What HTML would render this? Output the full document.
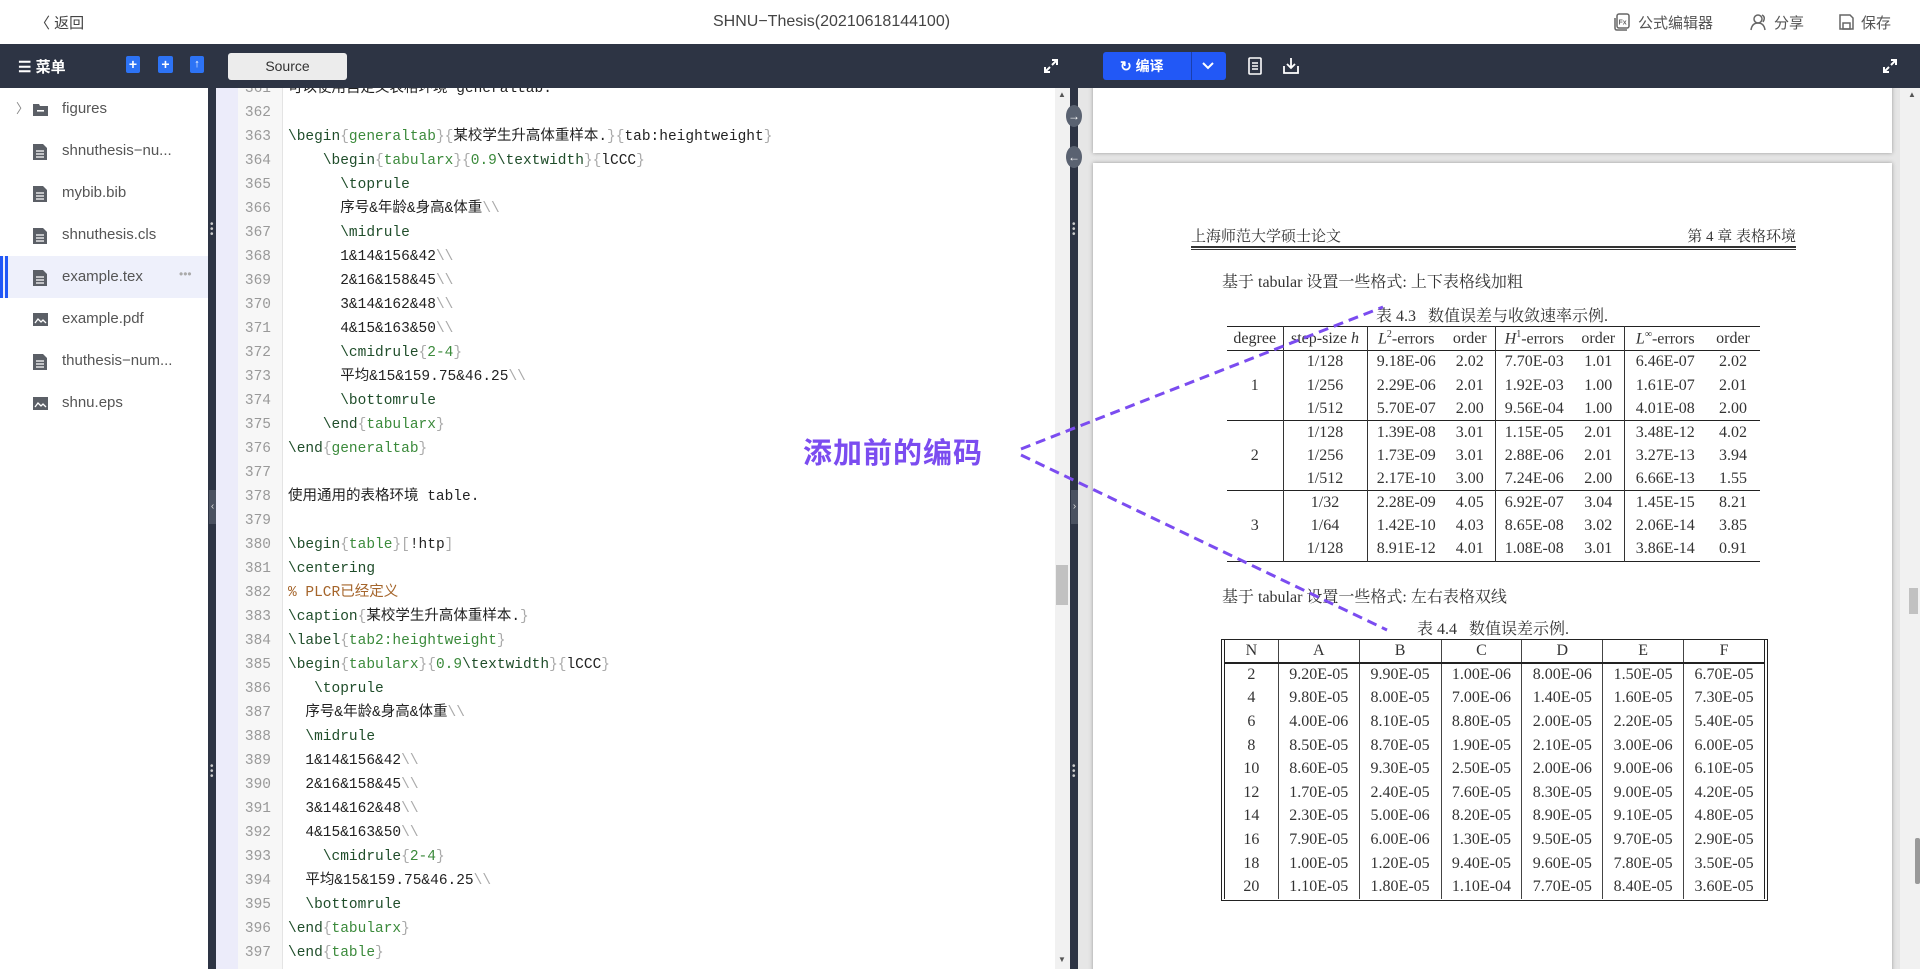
<!DOCTYPE html>
<html><head><meta charset="utf-8">
<style>
*{margin:0;padding:0;box-sizing:border-box}
body{width:1920px;height:969px;overflow:hidden;background:#fff;font-family:"Liberation Sans","Noto Sans CJK SC",sans-serif;position:relative;color:#333}
.a{position:absolute}
.top{left:0;top:0;width:1920px;height:44px;background:#fff}
.bar{left:0;top:44px;width:1920px;height:44px;background:#2d3444}
.side{left:0;top:88px;width:208px;height:881px;background:#fff}
.item{position:absolute;left:0;width:208px;height:42px;font-size:15px;color:#555;line-height:42px}
.item .t{position:absolute;left:62px}
.item svg{position:absolute;left:33px;top:14px}
.div{background:#2d3444;width:8px}
.code{left:216px;top:88px;width:839px;height:881px;overflow:hidden;background:#fff}
.gut1{left:0;top:0;width:22px;height:881px;background:#ececfa}
.gut2{left:22px;top:0;width:45px;height:881px;background:#f7f7f7;border-right:1px solid #e4e4e4}
.lines{position:absolute;left:0;top:-11px;width:839px}
.ln{height:24px;line-height:24px;font-family:"Liberation Mono","Noto Sans CJK SC",monospace;font-size:14.5px;white-space:pre;position:relative}
.ln .n{position:absolute;left:22px;width:33px;text-align:right;color:#999}
.ln .c{position:absolute;left:72px;color:#222}
.k{color:#1f4d2a}.g{color:#3b8a3b}.b{color:#aaa}.m{color:#a5652b}
.pdf{left:1078px;top:88px;width:822px;height:881px;background:#e6e6e6;overflow:hidden}
.page{position:absolute;left:15px;width:799px;background:#fff;box-shadow:0 0 4px #999}
.serif{font-family:"Liberation Serif","Noto Serif CJK SC",serif;color:#333}
table{border-collapse:collapse}
td{padding:0;text-align:center;font-family:"Liberation Serif","Noto Serif CJK SC",serif;font-size:16px;color:#333}
</style></head><body>

<div class="a top">
  <div class="a" style="left:35px;top:12px;font-size:15px;color:#444">〈 返回</div>
  <div class="a" style="left:713px;top:13px;font-size:16px;color:#444">SHNU−Thesis(20210618144100)</div>
  <svg class="a" style="left:1613px;top:13px" width="17" height="18" viewBox="0 0 17 18"><path d="M2 5V15Q2 17 4 17H14" fill="none" stroke="#666" stroke-width="1.5"/><rect x="4" y="1" width="12" height="14" rx="2" fill="none" stroke="#666" stroke-width="1.5"/><text x="5.5" y="11.5" font-size="7" font-family="Liberation Sans" fill="#666" font-weight="bold">Fx</text></svg>
  <div class="a" style="left:1638px;top:12px;font-size:15px;color:#555">公式编辑器</div>
  <svg class="a" style="left:1750px;top:13px" width="18" height="18" viewBox="0 0 18 18"><circle cx="8" cy="6" r="4" fill="none" stroke="#666" stroke-width="1.5"/><path d="M1 17Q2 10 8 10Q14 10 15 17M12 2Q16 4 13 9" fill="none" stroke="#666" stroke-width="1.5"/></svg>
  <div class="a" style="left:1774px;top:12px;font-size:15px;color:#555">分享</div>
  <svg class="a" style="left:1838px;top:13px" width="17" height="18" viewBox="0 0 17 18"><path d="M2 2H12L15 5V16H2Z" fill="none" stroke="#666" stroke-width="1.5"/><rect x="5" y="10" width="7" height="6" fill="none" stroke="#666" stroke-width="1.5"/></svg>
  <div class="a" style="left:1861px;top:12px;font-size:15px;color:#555">保存</div>
</div>

<div class="a bar">
  <div class="a" style="left:18px;top:12px;color:#fff;font-size:15px;font-weight:bold">☰ 菜单</div>
  <div class="a" style="left:126px;top:12px;width:14px;height:17px;background:#2d73f5;border-radius:2px;color:#fff;font-size:14px;line-height:17px;text-align:center;font-weight:bold">+</div>
  <div class="a" style="left:158px;top:12px;width:15px;height:17px;background:#2d73f5;border-radius:2px;color:#fff;font-size:14px;line-height:17px;text-align:center;font-weight:bold">+</div>
  <div class="a" style="left:190px;top:12px;width:14px;height:17px;background:#2d73f5;border-radius:2px;color:#fff;font-size:11px;line-height:17px;text-align:center;font-weight:bold">↑</div>
  <div class="a" style="left:228px;top:9px;width:119px;height:27px;background:#ececec;border-radius:3px;font-size:14px;line-height:27px;text-align:center;color:#333">Source</div>
  <svg class="a" style="left:1043px;top:14px" width="16" height="16" viewBox="0 0 16 16"><path d="M9 2H14V7M14 2L9 7M7 14H2V9M2 14L7 9" fill="none" stroke="#fff" stroke-width="2"/></svg>
  <div class="a" style="left:1103px;top:8px;width:123px;height:28px;background:#2258f6;border-radius:3px"></div>
  <div class="a" style="left:1191px;top:8px;width:1px;height:28px;background:#1a3fae"></div>
  <div class="a" style="left:1120px;top:12px;color:#fff;font-size:14px;font-weight:bold">↻ 编译</div>
  <svg class="a" style="left:1202px;top:17px" width="12" height="10" viewBox="0 0 12 10"><path d="M1 2L6 7L11 2" fill="none" stroke="#fff" stroke-width="2"/></svg>
  <svg class="a" style="left:1248px;top:13px" width="14" height="18" viewBox="0 0 14 18"><rect x="1" y="1" width="12" height="16" rx="1" fill="none" stroke="#fff" stroke-width="1.6"/><path d="M4 6H10M4 9H10M4 12H10" stroke="#fff" stroke-width="1.5"/></svg>
  <svg class="a" style="left:1282px;top:13px" width="18" height="18" viewBox="0 0 18 18"><path d="M2 9V16H16V9M9 1V11M5 7L9 11L13 7" fill="none" stroke="#fff" stroke-width="1.8"/></svg>
  <svg class="a" style="left:1882px;top:14px" width="16" height="16" viewBox="0 0 16 16"><path d="M9 2H14V7M14 2L9 7M7 14H2V9M2 14L7 9" fill="none" stroke="#fff" stroke-width="2"/></svg>
</div>

<div class="a side">
  <div class="item" style="top:0"><span class="a" style="left:16px;color:#888;font-size:13px">〉</span><svg width="15" height="13" viewBox="0 0 15 13" style="top:15px"><path d="M0 1H6L7 3H15V13H0Z" fill="#5b5f66"/><rect x="4" y="7" width="7" height="1.6" fill="#fff"/></svg><span class="t">figures</span></div>
  <div class="item" style="top:42px"><svg width="14" height="16"><path d="M0 0H10L14 4V16H0Z" fill="#5b5f66"/><path d="M3 7H11M3 10H11M3 13H11" stroke="#fff" stroke-width="1.3"/></svg><span class="t">shnuthesis−nu...</span></div>
  <div class="item" style="top:84px"><svg width="14" height="16"><path d="M0 0H10L14 4V16H0Z" fill="#5b5f66"/><path d="M3 7H11M3 10H11M3 13H11" stroke="#fff" stroke-width="1.3"/></svg><span class="t">mybib.bib</span></div>
  <div class="item" style="top:126px"><svg width="14" height="16"><path d="M0 0H10L14 4V16H0Z" fill="#5b5f66"/><path d="M3 7H11M3 10H11M3 13H11" stroke="#fff" stroke-width="1.3"/></svg><span class="t">shnuthesis.cls</span></div>
  <div class="item" style="top:168px;background:#eef0fb"><div class="a" style="left:0;top:0;width:3px;height:42px;background:#2258f6"></div><div class="a" style="left:5px;top:0;width:3px;height:42px;background:#2258f6"></div><svg width="14" height="16"><path d="M0 0H10L14 4V16H0Z" fill="#5b5f66"/><path d="M3 7H11M3 10H11M3 13H11" stroke="#fff" stroke-width="1.3"/></svg><span class="t">example.tex</span><span class="a" style="left:179px;color:#aaa;font-size:12px;top:-3px">•••</span></div>
  <div class="item" style="top:210px"><svg width="15" height="13" style="top:15px"><rect width="15" height="13" fill="#5b5f66"/><path d="M2 10L5 6L8 9L10 7L13 10" fill="none" stroke="#fff" stroke-width="1.3"/></svg><span class="t">example.pdf</span></div>
  <div class="item" style="top:252px"><svg width="14" height="16"><path d="M0 0H10L14 4V16H0Z" fill="#5b5f66"/><path d="M3 7H11M3 10H11M3 13H11" stroke="#fff" stroke-width="1.3"/></svg><span class="t">thuthesis−num...</span></div>
  <div class="item" style="top:294px"><svg width="15" height="13" style="top:15px"><rect width="15" height="13" fill="#5b5f66"/><path d="M2 10L5 6L8 9L10 7L13 10" fill="none" stroke="#fff" stroke-width="1.3"/></svg><span class="t">shnu.eps</span></div>
</div>
<div class="a div" style="left:208px;top:88px;height:881px"></div>
<div class="a" style="left:210px;top:222px;color:#ccc;font-size:10px;line-height:5px">•<br>•<br>•</div>
<div class="a" style="left:210px;top:764px;color:#ccc;font-size:10px;line-height:5px">•<br>•<br>•</div>
<div class="a" style="left:209px;top:490px;width:7px;height:34px;background:#4a5160;color:#ddd;font-size:10px;line-height:34px;text-align:center">‹</div>

<div class="a code">
  <div class="a gut1"></div><div class="a gut2"></div>
  <div class="lines">
<div class="ln"><span class="n">361</span><span class="c">可以使用自定义表格环境 generaltab.</span></div>
<div class="ln"><span class="n">362</span><span class="c"></span></div>
<div class="ln"><span class="n">363</span><span class="c"><span class="k">\begin</span><span class="b">{</span><span class="g">generaltab</span><span class="b">}{</span>某校学生升高体重样本.<span class="b">}{</span>tab:heightweight<span class="b">}</span></span></div>
<div class="ln"><span class="n">364</span><span class="c">    <span class="k">\begin</span><span class="b">{</span><span class="g">tabularx</span><span class="b">}{</span><span class="g">0.9</span><span class="k">\textwidth</span><span class="b">}{</span>lCCC<span class="b">}</span></span></div>
<div class="ln"><span class="n">365</span><span class="c">      <span class="k">\toprule</span></span></div>
<div class="ln"><span class="n">366</span><span class="c">      序号&amp;年龄&amp;身高&amp;体重<span class="b">\\</span></span></div>
<div class="ln"><span class="n">367</span><span class="c">      <span class="k">\midrule</span></span></div>
<div class="ln"><span class="n">368</span><span class="c">      1&amp;14&amp;156&amp;42<span class="b">\\</span></span></div>
<div class="ln"><span class="n">369</span><span class="c">      2&amp;16&amp;158&amp;45<span class="b">\\</span></span></div>
<div class="ln"><span class="n">370</span><span class="c">      3&amp;14&amp;162&amp;48<span class="b">\\</span></span></div>
<div class="ln"><span class="n">371</span><span class="c">      4&amp;15&amp;163&amp;50<span class="b">\\</span></span></div>
<div class="ln"><span class="n">372</span><span class="c">      <span class="k">\cmidrule</span><span class="b">{</span><span class="g">2-4</span><span class="b">}</span></span></div>
<div class="ln"><span class="n">373</span><span class="c">      平均&amp;15&amp;159.75&amp;46.25<span class="b">\\</span></span></div>
<div class="ln"><span class="n">374</span><span class="c">      <span class="k">\bottomrule</span></span></div>
<div class="ln"><span class="n">375</span><span class="c">    <span class="k">\end</span><span class="b">{</span><span class="g">tabularx</span><span class="b">}</span></span></div>
<div class="ln"><span class="n">376</span><span class="c"><span class="k">\end</span><span class="b">{</span><span class="g">generaltab</span><span class="b">}</span></span></div>
<div class="ln"><span class="n">377</span><span class="c"></span></div>
<div class="ln"><span class="n">378</span><span class="c">使用通用的表格环境 table.</span></div>
<div class="ln"><span class="n">379</span><span class="c"></span></div>
<div class="ln"><span class="n">380</span><span class="c"><span class="k">\begin</span><span class="b">{</span><span class="g">table</span><span class="b">}[</span>!htp<span class="b">]</span></span></div>
<div class="ln"><span class="n">381</span><span class="c"><span class="k">\centering</span></span></div>
<div class="ln"><span class="n">382</span><span class="c"><span class="m">% PLCR已经定义</span></span></div>
<div class="ln"><span class="n">383</span><span class="c"><span class="k">\caption</span><span class="b">{</span>某校学生升高体重样本.<span class="b">}</span></span></div>
<div class="ln"><span class="n">384</span><span class="c"><span class="k">\label</span><span class="b">{</span><span class="g">tab2:heightweight</span><span class="b">}</span></span></div>
<div class="ln"><span class="n">385</span><span class="c"><span class="k">\begin</span><span class="b">{</span><span class="g">tabularx</span><span class="b">}{</span><span class="g">0.9</span><span class="k">\textwidth</span><span class="b">}{</span>lCCC<span class="b">}</span></span></div>
<div class="ln"><span class="n">386</span><span class="c">   <span class="k">\toprule</span></span></div>
<div class="ln"><span class="n">387</span><span class="c">  序号&amp;年龄&amp;身高&amp;体重<span class="b">\\</span></span></div>
<div class="ln"><span class="n">388</span><span class="c">  <span class="k">\midrule</span></span></div>
<div class="ln"><span class="n">389</span><span class="c">  1&amp;14&amp;156&amp;42<span class="b">\\</span></span></div>
<div class="ln"><span class="n">390</span><span class="c">  2&amp;16&amp;158&amp;45<span class="b">\\</span></span></div>
<div class="ln"><span class="n">391</span><span class="c">  3&amp;14&amp;162&amp;48<span class="b">\\</span></span></div>
<div class="ln"><span class="n">392</span><span class="c">  4&amp;15&amp;163&amp;50<span class="b">\\</span></span></div>
<div class="ln"><span class="n">393</span><span class="c">    <span class="k">\cmidrule</span><span class="b">{</span><span class="g">2-4</span><span class="b">}</span></span></div>
<div class="ln"><span class="n">394</span><span class="c">  平均&amp;15&amp;159.75&amp;46.25<span class="b">\\</span></span></div>
<div class="ln"><span class="n">395</span><span class="c">  <span class="k">\bottomrule</span></span></div>
<div class="ln"><span class="n">396</span><span class="c"><span class="k">\end</span><span class="b">{</span><span class="g">tabularx</span><span class="b">}</span></span></div>
<div class="ln"><span class="n">397</span><span class="c"><span class="k">\end</span><span class="b">{</span><span class="g">table</span><span class="b">}</span></span></div>
  </div>
</div>
<div class="a" style="left:1055px;top:88px;width:15px;height:881px;background:#f1f1f1"></div>
<div class="a" style="left:1056px;top:565px;width:12px;height:40px;background:#c1c1c1"></div>
<div class="a" style="left:1058px;top:90px;font-size:8px;color:#555">▲</div>
<div class="a" style="left:1058px;top:955px;font-size:8px;color:#555">▼</div>

<div class="a pdf">
  <div class="page" style="top:-20px;height:85px"></div>
  <div class="page" style="top:75px;height:830px"></div>
</div>
<div class="a" style="left:1900px;top:88px;width:20px;height:881px;background:#f1f1f1"></div>
<div class="a" style="left:1909px;top:588px;width:9px;height:26px;background:#c1c1c1"></div>
<div class="a" style="left:1908px;top:90px;font-size:8px;color:#555">▲</div>
<div class="a" style="left:1915px;top:838px;width:5px;height:46px;background:#999;border-radius:2px"></div>

<div class="a div" style="left:1070px;top:88px;height:881px"></div>
<div class="a" style="left:1066px;top:105px;width:16px;height:22px;border-radius:50%;background:#5a6271;color:#fff;font-size:12px;line-height:22px;text-align:center;font-weight:bold">→</div>
<div class="a" style="left:1066px;top:146px;width:16px;height:22px;border-radius:50%;background:#5a6271;color:#fff;font-size:12px;line-height:22px;text-align:center;font-weight:bold">←</div>
<div class="a" style="left:1072px;top:222px;color:#ccc;font-size:10px;line-height:5px">•<br>•<br>•</div>
<div class="a" style="left:1072px;top:764px;color:#ccc;font-size:10px;line-height:5px">•<br>•<br>•</div>
<div class="a" style="left:1071px;top:490px;width:7px;height:34px;background:#4a5160;color:#ddd;font-size:10px;line-height:34px;text-align:center">›</div>

<div class="a serif" style="left:1191px;top:225px;font-size:15px">上海师范大学硕士论文</div>
<div class="a serif" style="left:1680px;top:225px;width:116px;text-align:right;font-size:15px">第 4 章  表格环境</div>
<div class="a" style="left:1191px;top:246px;width:605px;height:1.5px;background:#333"></div>
<div class="a" style="left:1191px;top:249px;width:605px;height:1px;background:#333"></div>
<div class="a serif" style="left:1222px;top:269px;font-size:16px">基于 tabular 设置一些格式: 上下表格线加粗</div>
<div class="a serif" style="left:1376px;top:303px;font-size:16px">表 4.3 &nbsp;&nbsp;数值误差与收敛速率示例.</div>

<table class="a" style="left:1227px;top:326px;width:533px;border-top:1.6px solid #222;border-bottom:1.6px solid #222">
<colgroup><col style="width:56px"><col style="width:84px"><col style="width:78px"><col style="width:50px"><col style="width:78px"><col style="width:51px"><col style="width:82px"><col style="width:54px"></colgroup>
<tr style="height:24px;border-bottom:1px solid #222"><td style="border-right:1px solid #333">degree</td><td style="border-right:1px solid #333">step-size <i>h</i></td><td><i>L</i><sup style="font-size:10px">2</sup>-errors</td><td style="border-right:1px solid #333">order</td><td><i>H</i><sup style="font-size:10px">1</sup>-errors</td><td style="border-right:1px solid #333">order</td><td><i>L</i><sup style="font-size:10px">∞</sup>-errors</td><td>order</td></tr>
<tr style="height:23.4px"><td rowspan="3" style="border-right:1px solid #333">1</td><td style="border-right:1px solid #333">1/128</td><td>9.18E-06</td><td style="border-right:1px solid #333">2.02</td><td>7.70E-03</td><td style="border-right:1px solid #333">1.01</td><td>6.46E-07</td><td>2.02</td></tr>
<tr style="height:23.4px"><td style="border-right:1px solid #333">1/256</td><td>2.29E-06</td><td style="border-right:1px solid #333">2.01</td><td>1.92E-03</td><td style="border-right:1px solid #333">1.00</td><td>1.61E-07</td><td>2.01</td></tr>
<tr style="height:23.4px;border-bottom:1px solid #222"><td style="border-right:1px solid #333">1/512</td><td>5.70E-07</td><td style="border-right:1px solid #333">2.00</td><td>9.56E-04</td><td style="border-right:1px solid #333">1.00</td><td>4.01E-08</td><td>2.00</td></tr>
<tr style="height:23.4px"><td rowspan="3" style="border-right:1px solid #333">2</td><td style="border-right:1px solid #333">1/128</td><td>1.39E-08</td><td style="border-right:1px solid #333">3.01</td><td>1.15E-05</td><td style="border-right:1px solid #333">2.01</td><td>3.48E-12</td><td>4.02</td></tr>
<tr style="height:23.4px"><td style="border-right:1px solid #333">1/256</td><td>1.73E-09</td><td style="border-right:1px solid #333">3.01</td><td>2.88E-06</td><td style="border-right:1px solid #333">2.01</td><td>3.27E-13</td><td>3.94</td></tr>
<tr style="height:23.4px;border-bottom:1px solid #222"><td style="border-right:1px solid #333">1/512</td><td>2.17E-10</td><td style="border-right:1px solid #333">3.00</td><td>7.24E-06</td><td style="border-right:1px solid #333">2.00</td><td>6.66E-13</td><td>1.55</td></tr>
<tr style="height:23.4px"><td rowspan="3" style="border-right:1px solid #333">3</td><td style="border-right:1px solid #333">1/32</td><td>2.28E-09</td><td style="border-right:1px solid #333">4.05</td><td>6.92E-07</td><td style="border-right:1px solid #333">3.04</td><td>1.45E-15</td><td>8.21</td></tr>
<tr style="height:23.4px"><td style="border-right:1px solid #333">1/64</td><td>1.42E-10</td><td style="border-right:1px solid #333">4.03</td><td>8.65E-08</td><td style="border-right:1px solid #333">3.02</td><td>2.06E-14</td><td>3.85</td></tr>
<tr style="height:23.4px"><td style="border-right:1px solid #333">1/128</td><td>8.91E-12</td><td style="border-right:1px solid #333">4.01</td><td>1.08E-08</td><td style="border-right:1px solid #333">3.01</td><td>3.86E-14</td><td>0.91</td></tr>
</table>

<div class="a serif" style="left:1222px;top:584px;font-size:16px">基于 tabular 设置一些格式: 左右表格双线</div>
<div class="a serif" style="left:1417px;top:616px;font-size:16px">表 4.4 &nbsp;&nbsp;数值误差示例.</div>

<div class="a" style="left:1221px;top:639px;width:547px;height:262px;border:1px solid #222;border-top:1.5px solid #222;border-bottom:1.5px solid #222"></div>
<table class="a" style="left:1224px;top:640px;width:541px;border-left:1px solid #222;border-right:1px solid #222">
<colgroup><col style="width:54px"><col style="width:81px"><col style="width:82px"><col style="width:81px"><col style="width:81px"><col style="width:81px"><col style="width:81px"></colgroup>
<tr style="height:23px;border-bottom:2px solid #222"><td style="border-right:1px solid #444">N</td><td style="border-right:1px solid #444">A</td><td style="border-right:1px solid #444">B</td><td style="border-right:1px solid #444">C</td><td style="border-right:1px solid #444">D</td><td style="border-right:1px solid #444">E</td><td>F</td></tr>
<tr style="height:23.6px"><td style="border-right:1px solid #444">2</td><td style="border-right:1px solid #444">9.20E-05</td><td style="border-right:1px solid #444">9.90E-05</td><td style="border-right:1px solid #444">1.00E-06</td><td style="border-right:1px solid #444">8.00E-06</td><td style="border-right:1px solid #444">1.50E-05</td><td>6.70E-05</td></tr>
<tr style="height:23.6px"><td style="border-right:1px solid #444">4</td><td style="border-right:1px solid #444">9.80E-05</td><td style="border-right:1px solid #444">8.00E-05</td><td style="border-right:1px solid #444">7.00E-06</td><td style="border-right:1px solid #444">1.40E-05</td><td style="border-right:1px solid #444">1.60E-05</td><td>7.30E-05</td></tr>
<tr style="height:23.6px"><td style="border-right:1px solid #444">6</td><td style="border-right:1px solid #444">4.00E-06</td><td style="border-right:1px solid #444">8.10E-05</td><td style="border-right:1px solid #444">8.80E-05</td><td style="border-right:1px solid #444">2.00E-05</td><td style="border-right:1px solid #444">2.20E-05</td><td>5.40E-05</td></tr>
<tr style="height:23.6px"><td style="border-right:1px solid #444">8</td><td style="border-right:1px solid #444">8.50E-05</td><td style="border-right:1px solid #444">8.70E-05</td><td style="border-right:1px solid #444">1.90E-05</td><td style="border-right:1px solid #444">2.10E-05</td><td style="border-right:1px solid #444">3.00E-06</td><td>6.00E-05</td></tr>
<tr style="height:23.6px"><td style="border-right:1px solid #444">10</td><td style="border-right:1px solid #444">8.60E-05</td><td style="border-right:1px solid #444">9.30E-05</td><td style="border-right:1px solid #444">2.50E-05</td><td style="border-right:1px solid #444">2.00E-06</td><td style="border-right:1px solid #444">9.00E-06</td><td>6.10E-05</td></tr>
<tr style="height:23.6px"><td style="border-right:1px solid #444">12</td><td style="border-right:1px solid #444">1.70E-05</td><td style="border-right:1px solid #444">2.40E-05</td><td style="border-right:1px solid #444">7.60E-05</td><td style="border-right:1px solid #444">8.30E-05</td><td style="border-right:1px solid #444">9.00E-05</td><td>4.20E-05</td></tr>
<tr style="height:23.6px"><td style="border-right:1px solid #444">14</td><td style="border-right:1px solid #444">2.30E-05</td><td style="border-right:1px solid #444">5.00E-06</td><td style="border-right:1px solid #444">8.20E-05</td><td style="border-right:1px solid #444">8.90E-05</td><td style="border-right:1px solid #444">9.10E-05</td><td>4.80E-05</td></tr>
<tr style="height:23.6px"><td style="border-right:1px solid #444">16</td><td style="border-right:1px solid #444">7.90E-05</td><td style="border-right:1px solid #444">6.00E-06</td><td style="border-right:1px solid #444">1.30E-05</td><td style="border-right:1px solid #444">9.50E-05</td><td style="border-right:1px solid #444">9.70E-05</td><td>2.90E-05</td></tr>
<tr style="height:23.6px"><td style="border-right:1px solid #444">18</td><td style="border-right:1px solid #444">1.00E-05</td><td style="border-right:1px solid #444">1.20E-05</td><td style="border-right:1px solid #444">9.40E-05</td><td style="border-right:1px solid #444">9.60E-05</td><td style="border-right:1px solid #444">7.80E-05</td><td>3.50E-05</td></tr>
<tr style="height:23.6px"><td style="border-right:1px solid #444">20</td><td style="border-right:1px solid #444">1.10E-05</td><td style="border-right:1px solid #444">1.80E-05</td><td style="border-right:1px solid #444">1.10E-04</td><td style="border-right:1px solid #444">7.70E-05</td><td style="border-right:1px solid #444">8.40E-05</td><td>3.60E-05</td></tr>
</table>

<div class="a" style="left:803px;top:430px;font-size:29px;font-weight:bold;color:#7b4cf0;font-family:'Noto Sans CJK SC',sans-serif;letter-spacing:1px">添加前的编码</div>
<svg class="a" style="left:0;top:0" width="1920" height="969"><path d="M1021 449L1383 307M1021 455L1387 630" stroke="#7b4cf0" stroke-width="3" stroke-dasharray="10 6" fill="none"/></svg>
</body></html>
